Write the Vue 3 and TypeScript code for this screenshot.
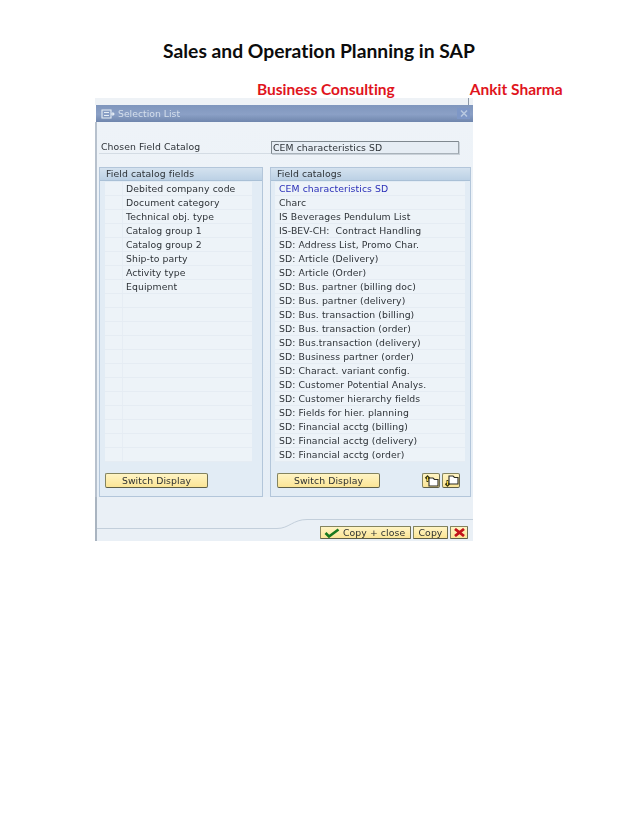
<script setup lang="ts">
const leftItems: string[] = [
  'Debited company code',
  'Document category',
  'Technical obj. type',
  'Catalog group 1',
  'Catalog group 2',
  'Ship-to party',
  'Activity type',
  'Equipment',
  '', '', '', '', '', '', '', '', '', '', '', '',
]
const rightItems: string[] = [
  'CEM characteristics SD',
  'Charc',
  'IS Beverages Pendulum List',
  'IS-BEV-CH:  Contract Handling',
  'SD: Address List, Promo Char.',
  'SD: Article (Delivery)',
  'SD: Article (Order)',
  'SD: Bus. partner (billing doc)',
  'SD: Bus. partner (delivery)',
  'SD: Bus. transaction (billing)',
  'SD: Bus. transaction (order)',
  'SD: Bus.transaction (delivery)',
  'SD: Business partner (order)',
  'SD: Charact. variant config.',
  'SD: Customer Potential Analys.',
  'SD: Customer hierarchy fields',
  'SD: Fields for hier. planning',
  'SD: Financial acctg (billing)',
  'SD: Financial acctg (delivery)',
  'SD: Financial acctg (order)',
]
</script>

<template>
  <div class="page">
    <h1 class="title">Sales and Operation Planning in SAP</h1>
    <div class="byline">
      <span>Business Consulting</span>
      <span>Ankit Sharma</span>
    </div>

    <section class="window">
      <div class="top-strip"><i class="strip-tick"></i></div>
      <header class="titlebar">
        <svg class="title-icon" width="14" height="10" viewBox="0 0 14 10">
          <path d="M1 1h9v8H1zM3 3.500h5M3 6.500h5M10 5h3M11.500 3.500 13 5l-1.500 1.500" fill="none" stroke="#e6edf5" stroke-width="1.100" />
        </svg>
        <span class="title-text">Selection List</span>
        <span class="close-box">
          <svg width="8" height="7" viewBox="0 0 8 7">
            <path d="M1 .5l6 6M7 .5l-6 6" stroke="#b9c9e0" stroke-width="1.500" />
          </svg>
        </span>
      </header>

      <div class="body">
        <div class="chosen">
          <span class="chosen-label">Chosen Field Catalog</span>
          <span class="chosen-input">CEM characteristics SD</span>
        </div>

        <div class="panels">
          <div class="panel panel-left">
            <div class="panel-head">Field catalog fields</div>
            <ul class="list list-left">
              <li v-for="(item, i) in leftItems" :key="i" class="row">
                <span class="row-key"></span>
                <span class="row-text">{{ item }}</span>
              </li>
            </ul>
            <div class="panel-actions">
              <button class="btn btn-switch" type="button">Switch Display</button>
            </div>
          </div>

          <div class="panel panel-right">
            <div class="panel-head">Field catalogs</div>
            <ul class="list list-right">
              <li v-for="(item, i) in rightItems" :key="i" class="row" :class="{ chosen_row: i === 0 }">
                <span class="row-text">{{ item }}</span>
              </li>
            </ul>
            <div class="panel-actions">
              <button class="btn btn-switch" type="button">Switch Display</button>
              <span class="spacer"></span>
              <button class="btn btn-icon" type="button" aria-label="Select all">
                <svg width="15" height="12" viewBox="0 0 15 12">
                  <path d="M5 3h4l1.500 1.500H14V11H5z" fill="#fff" stroke="#2b2b22" stroke-width="1.100" />
                  <path d="M3.500 7V1.500M1.500 3.500l2-2 2 2" fill="none" stroke="#3d3a10" stroke-width="2" />
                  <path d="M3.500 6V2" stroke="#f1cf3a" stroke-width="1" />
                </svg>
              </button>
              <button class="btn btn-icon" type="button" aria-label="Deselect all">
                <svg width="15" height="12" viewBox="0 0 15 12">
                  <path d="M5 1h4l1.500 1.500H14V9H5z" fill="#fff" stroke="#2b2b22" stroke-width="1.100" />
                  <path d="M3.500 5v5.500M1.500 8.500l2 2 2-2" fill="none" stroke="#3d3a10" stroke-width="2" />
                  <path d="M3.500 6v4" stroke="#f1cf3a" stroke-width="1" />
                </svg>
              </button>
            </div>
          </div>
        </div>
      </div>

      <footer class="footer">
        <svg class="footer-line" width="376" height="12" viewBox="0 0 376 12" preserveAspectRatio="none">
          <path d="M0 10.500H180C192 10.500 196 1.500 210 1.500H376" fill="none" stroke="#c3cfdb" stroke-width="1" />
        </svg>
        <button class="btn btn-foot btn-copy-close" type="button">
          <svg width="16" height="10" viewBox="0 0 16 10">
            <path d="M1.500 5 5 8.500 14.500 1.500" fill="none" stroke="#17791f" stroke-width="2.600" />
          </svg>
          <span>Copy + close</span>
        </button>
        <button class="btn btn-foot btn-copy" type="button">Copy</button>
        <button class="btn btn-foot btn-cancel" type="button" aria-label="Cancel">
          <svg width="13" height="9" viewBox="0 0 13 9">
            <path d="M2 1l9 7M11 1 2 8" stroke="#c3121a" stroke-width="2.800" />
          </svg>
        </button>
      </footer>
    </section>
  </div>
</template>

<style scoped>
.page {
  width: 638px;
  height: 826px;
  background: #fff;
  overflow: hidden;
  box-sizing: border-box;
  padding-top: 39px;
}
.title {
  margin: 0;
  font: 700 19.300px/24px Lato, "Open Sans", sans-serif;
  font-variant-ligatures: none;
  color: #0c0c0c;
  text-align: center;
}
.byline {
  display: flex;
  gap: 75px;
  margin-top: 14px;
  padding-left: 257px;
  font: 700 15.500px/24px Lato, "Open Sans", sans-serif;
  font-variant-ligatures: none;
  color: #e0141c;
}
.window {
  width: 378px;
  margin: -3px 0 0 95px;
  height: 443px;
  display: flex;
  flex-direction: column;
  box-sizing: border-box;
  font-family: "DejaVu Sans", Verdana, sans-serif;
  font-size: 9.300px;
  letter-spacing: 0.08px;
  color: #2e3338;
  filter: blur(0.45px);
}
.top-strip {
  height: 7px;
  background: #eef2f6;
  position: relative;
  flex: none;
}
.strip-tick {
  position: absolute;
  right: 4px;
  top: 0;
  bottom: 0;
  width: 1px;
  background: #8c97a5;
}
.titlebar {
  flex: none;
  height: 17px;
  margin-left: 1px;
  display: flex;
  align-items: center;
  padding: 0 3px 0 5px;
  background: linear-gradient(#7f96bd, #8ba0c6 55%, #6f86ad);
  color: #d5dfec;
  letter-spacing: 0;
}
.title-icon {
  margin-right: 3px;
}
.title-text {
  flex: 1;
}
.close-box {
  width: 13px;
  height: 11px;
  display: flex;
  align-items: center;
  justify-content: center;
  background: #7e97c6;
}
.body {
  flex: 1;
  min-height: 0;
  padding: 0 2px;
  border-left: 2px solid #b7c1cd;
  background: linear-gradient(#eef3f8, #e6eef6);
}
.chosen {
  display: flex;
  height: 13px;
  padding-top: 19px;
}
.chosen-label {
  width: 172px;
  height: 13px;
  line-height: 12px;
  flex: none;
  padding-left: 2px;
  box-sizing: border-box;
  border-bottom: 1px solid #d4dce4;
}
.chosen-input {
  width: 188px;
  height: 13px;
  line-height: 11px;
  box-sizing: border-box;
  padding-left: 1px;
  background: #e6edf4;
  border: 1px solid #7f888f;
  border-right-color: #9aa3aa;
  border-bottom-color: #a9b2ba;
  box-shadow: 1px 1px 0 #c9d1d9;
  white-space: pre;
}
.panels {
  display: flex;
  gap: 7px;
  margin-top: 13px;
}
.panel {
  height: 330px;
  box-sizing: border-box;
  display: flex;
  flex-direction: column;
  border: 1px solid #b3c6da;
  background: #e2ecf5;
}
.panel-left {
  width: 164px;
}
.panel-right {
  width: 201px;
}
.panel-head {
  flex: none;
  height: 12px;
  line-height: 11px;
  padding-left: 6px;
  background: linear-gradient(#d4e2ef, #bcd1e5);
  border-bottom: 1px solid #a9c0d6;
}
.list {
  list-style: none;
  margin: 1px 0 0;
  padding: 0;
  flex: none;
  height: 279px;
  background: #edf3f8;
}
.list-left {
  margin-left: 5px;
  width: 147px;
}
.list-right {
  margin-left: 4px;
  width: 190px;
}
.row {
  display: flex;
  align-items: center;
  height: 14px;
  box-sizing: border-box;
  border-bottom: 1px solid #e5ecf3;
  white-space: pre;
  line-height: 13px;
}
.row-key {
  width: 17px;
  align-self: stretch;
  flex: none;
  border-right: 1px solid #e6edf4;
  margin-right: 3px;
}
.list-right .row-text {
  padding-left: 4px;
}
.chosen_row {
  color: #2a2fb8;
}
.panel-actions {
  flex: none;
  display: flex;
  align-items: center;
  gap: 2px;
  margin-top: 12px;
  padding-left: 5px;
  padding-right: 10px;
}
.spacer {
  flex: 1;
}
.btn {
  box-sizing: border-box;
  margin: 0;
  padding: 0;
  font: inherit;
  letter-spacing: inherit;
  color: #2e3130;
  background: linear-gradient(#fff4c4, #fbe596);
  border: 1px solid #84845f;
  border-right-color: #6e6e52;
  border-bottom-color: #5e5e46;
  border-radius: 2px;
  display: inline-flex;
  align-items: center;
  justify-content: center;
}
.btn-switch {
  width: 103px;
  height: 15px;
}
.panel-right .btn-switch {
  margin-left: 1px;
}
.btn-icon {
  width: 18px;
  height: 15px;
}
.footer {
  flex: none;
  height: 44px;
  position: relative;
  display: flex;
  align-items: flex-start;
  justify-content: flex-end;
  gap: 2px;
  padding: 29px 3px 0 0;
  box-sizing: border-box;
  border-left: 2px solid #a9b4c0;
  background: #eaf0f6;
}
.footer-line {
  position: absolute;
  left: 0;
  top: 21px;
}
.btn-foot {
  height: 13px;
  border-radius: 1px;
}
.btn-copy-close {
  width: 91px;
  gap: 3px;
  justify-content: flex-start;
  padding-left: 3px;
}
.btn-copy {
  width: 35px;
}
.btn-cancel {
  width: 18px;
  margin-right: 2px;
}
</style>

<style>
html,
body {
  margin: 0;
  background: #fff;
}
</style>
